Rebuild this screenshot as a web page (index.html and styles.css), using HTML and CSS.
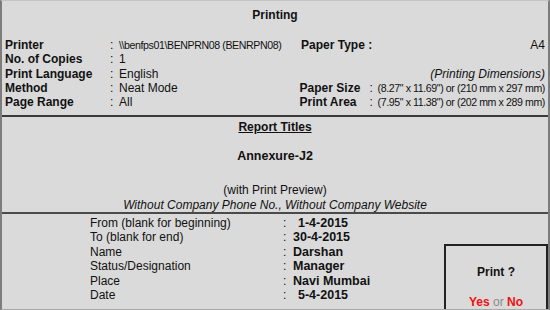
FILE: index.html
```html
<!DOCTYPE html>
<html lang="en">
<head>
  <meta charset="UTF-8" />
  <title>Printing</title>
  <link rel="stylesheet" href="styles.css">
</head>
<body>
  <div class="ekran">

    <div class="baski">
      <div class="baslik">Printing</div>
      <div class="satirlar">
        <div class="satir">
          <div class="sol"><span class="etiket">Printer</span><span class="ikinokta">:</span><span class="dar">\\benfps01\BENPRN08 (BENRPN08)</span></div>
          <div class="sag"><span class="etiket-sag">Paper Type :</span><span class="deger-sag">A4</span></div>
        </div>
        <div class="satir">
          <div class="sol"><span class="etiket">No. of Copies</span><span class="ikinokta">:</span><span>1</span></div>
          <div class="sag"></div>
        </div>
        <div class="satir">
          <div class="sol"><span class="etiket">Print Language</span><span class="ikinokta">:</span><span>English</span></div>
          <div class="sag"><span class="deger-sag egik">(Printing Dimensions)</span></div>
        </div>
        <div class="satir">
          <div class="sol"><span class="etiket">Method</span><span class="ikinokta">:</span><span>Neat Mode</span></div>
          <div class="sag"><span class="etiket-sag genis">Paper Size</span><span class="ikinokta-sag">:</span><span class="deger-sag dar">(8.27" x 11.69") or (210 mm x 297 mm)</span></div>
        </div>
        <div class="satir">
          <div class="sol"><span class="etiket">Page Range</span><span class="ikinokta">:</span><span>All</span></div>
          <div class="sag"><span class="etiket-sag genis">Print Area</span><span class="ikinokta-sag">:</span><span class="deger-sag dar">(7.95" x 11.38") or (202 mm x 289 mm)</span></div>
        </div>
      </div>
    </div>

    <div class="raporlar">
      <div class="rapor-baslik">Report Titles</div>
      <div class="ek">Annexure-J2</div>
      <div class="onizleme">(with Print Preview)</div>
      <div class="egik">Without Company Phone No., Without Company Website</div>
    </div>

    <div class="alt">
      <div class="liste">
        <div class="alt-satir"><span class="alt-etiket">From (blank for beginning)</span><span class="alt-nokta">:</span><span class="alt-deger tarih">1-4-2015</span></div>
        <div class="alt-satir"><span class="alt-etiket">To (blank for end)</span><span class="alt-nokta">:</span><span class="alt-deger">30-4-2015</span></div>
        <div class="alt-satir"><span class="alt-etiket">Name</span><span class="alt-nokta">:</span><span class="alt-deger">Darshan</span></div>
        <div class="alt-satir"><span class="alt-etiket">Status/Designation</span><span class="alt-nokta">:</span><span class="alt-deger">Manager</span></div>
        <div class="alt-satir"><span class="alt-etiket">Place</span><span class="alt-nokta">:</span><span class="alt-deger">Navi Mumbai</span></div>
        <div class="alt-satir"><span class="alt-etiket">Date</span><span class="alt-nokta">:</span><span class="alt-deger tarih">5-4-2015</span></div>
      </div>
      <div class="onay">
        <div class="onay-soru">Print ?</div>
        <div class="onay-secim"><span class="kirmizi">Yes</span> <span class="gri">or</span> <span class="kirmizi">No</span></div>
      </div>
    </div>

  </div>
</body>
</html>
```

FILE: styles.css
```css
body {
  margin: 0;
  background: #dadada;
}

.ekran {
  width: 550px;
  height: 310px;
  box-sizing: border-box;
  background: #dadada;
  border-left: 2px solid #7c7c7c;
  border-right: 2px solid #7c7c7c;
  border-top: 1px solid #c4c4c4;
  border-bottom: 1px solid #a8a8a8;
  font-family: "Liberation Sans", Arial, sans-serif;
  font-size: 12px;
  color: #111;
  display: flex;
  flex-direction: column;
}

.baski {
  height: 114px;
  border-bottom: 2px solid #3a3a3a;
}

.baslik {
  text-align: center;
  font-weight: bold;
  margin-top: 7px;
  line-height: 14px;
}

.satirlar {
  margin-top: 16px;
}

.satir {
  display: flex;
  line-height: 14.3px;
  height: 14.3px;
}

.sol {
  width: 296px;
  padding-left: 3px;
  display: flex;
  white-space: nowrap;
}

.etiket {
  width: 105px;
  font-weight: bold;
}

.ikinokta {
  width: 9px;
}

.dar {
  font-size: 10.6px;
  letter-spacing: -0.4px;
}

.sag {
  flex: 1;
  display: flex;
  padding-right: 3px;
  white-space: nowrap;
}

.sag span {
  flex-shrink: 0;
}

.etiket-sag {
  font-weight: bold;
}

.genis {
  width: 70px;
}

.ikinokta-sag {
  width: 8px;
}

.deger-sag {
  margin-left: auto;
}

.egik {
  font-style: italic;
}

.raporlar {
  height: 95px;
  border-bottom: 2px solid #4a4a4a;
  text-align: center;
  line-height: 14.5px;
}

.rapor-baslik {
  font-weight: bold;
  text-decoration: underline;
  margin-top: 3px;
}

.ek {
  font-weight: bold;
  font-size: 12.5px;
  margin-top: 14px;
}

.onizleme {
  margin-top: 20px;
}

.alt {
  flex: 1;
  display: flex;
}

.liste {
  flex: 1;
  padding-left: 88px;
  padding-top: 2px;
}

.alt-satir {
  display: flex;
  line-height: 14.4px;
  height: 14.4px;
  white-space: nowrap;
}

.alt-etiket {
  width: 193px;
}

.alt-nokta {
  width: 10px;
}

.alt-deger {
  font-weight: bold;
  font-size: 12.5px;
}

.tarih {
  padding-left: 5px;
}

.onay {
  width: 100px;
  height: 63px;
  align-self: flex-end;
  border: 2px solid #222;
  border-bottom: none;
  text-align: center;
}

.onay-soru {
  font-weight: bold;
  margin-top: 19px;
}

.onay-secim {
  margin-top: 16px;
  font-weight: bold;
}

.kirmizi {
  color: #f01010;
}

.gri {
  color: #8a8a8a;
  font-weight: normal;
}
```
